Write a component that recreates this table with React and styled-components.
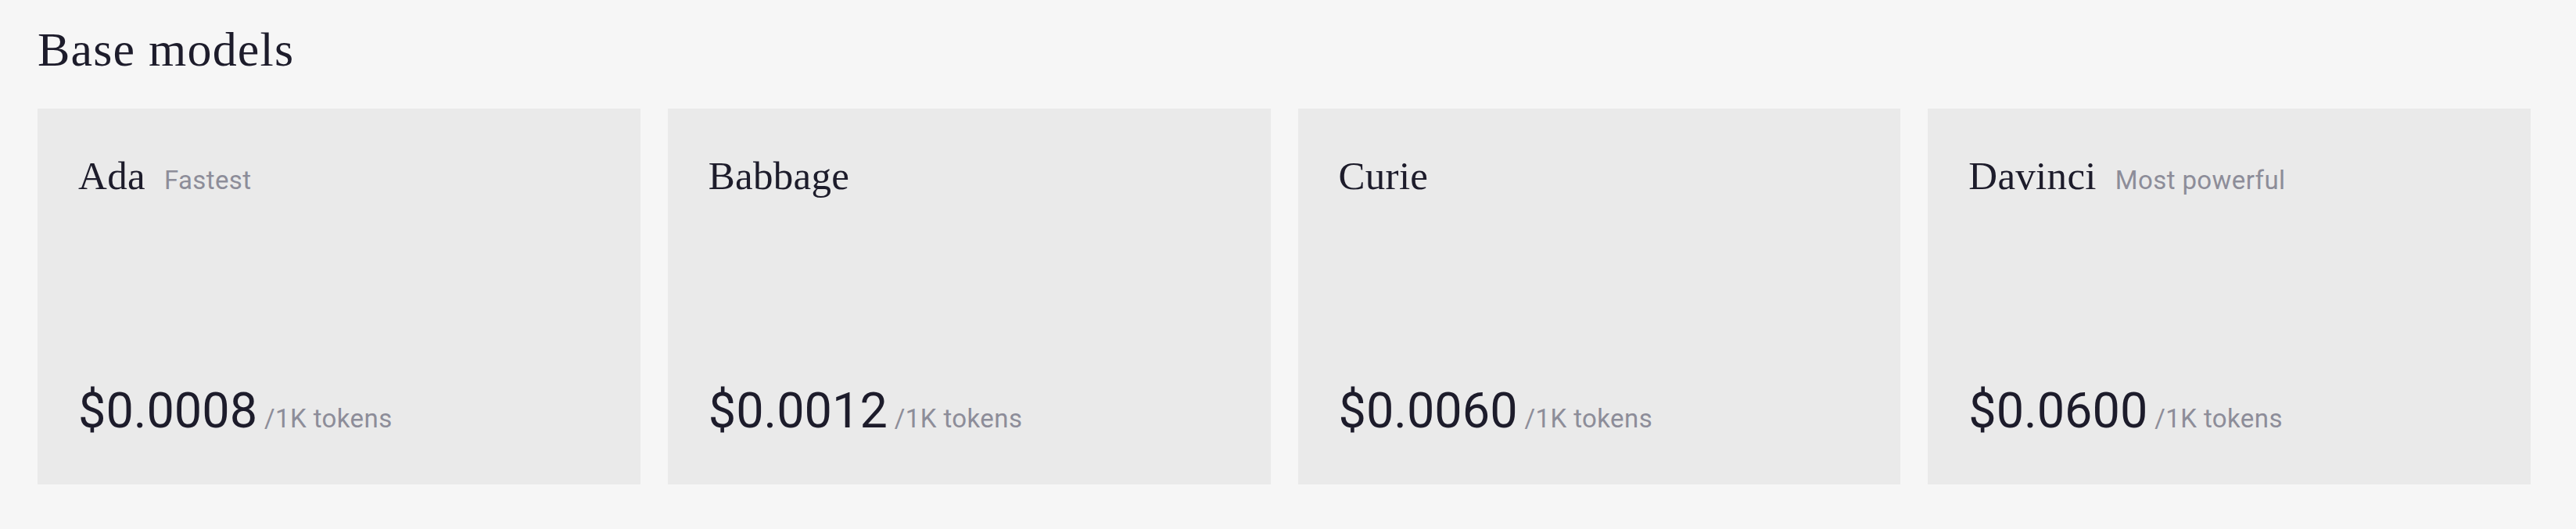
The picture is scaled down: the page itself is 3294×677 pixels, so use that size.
import React from 'react'
import styled, { createGlobalStyle } from 'styled-components'

const GlobalStyle = createGlobalStyle`
	html, body {
		margin: 0;
		padding: 0;
		background: #f6f6f6;
	}
`

const models = [
	{ name: 'Ada', note: 'Fastest', price: '$0.0008' },
	{ name: 'Babbage', price: '$0.0012' },
	{ name: 'Curie', price: '$0.0060' },
	{ name: 'Davinci', note: 'Most powerful', price: '$0.0600' },
]

const Page = styled.div`
	padding: 32px 58px 57px 48px;
	background: #f6f6f6;
	min-height: 677px;
	box-sizing: border-box;
`

const Title = styled.h2`
	margin: 0 0 45px;
	font-family: "Liberation Serif", "Times New Roman", serif;
	font-weight: 400;
	font-size: 62px;
	letter-spacing: 1.2px;
	line-height: 1;
	color: #1d1c2b;
`

const Grid = styled.div`
	display: grid;
	grid-template-columns: repeat(4, 1fr);
	gap: 35px;
`

const Card = styled.div`
	height: 481px;
	box-sizing: border-box;
	padding: 61px 52px 63px;
	background: #eaeaea;
	display: flex;
	flex-direction: column;
	justify-content: space-between;
`

const Head = styled.div`
	display: flex;
	align-items: baseline;
	gap: 24px;
`

const Name = styled.span`
	font-family: "Liberation Serif", "Times New Roman", serif;
	font-size: 51px;
	letter-spacing: 0.3px;
	line-height: 1;
	color: #1d1c2b;
`

const Muted = styled.span`
	font-family: Roboto, "Liberation Sans", sans-serif;
	font-size: 33px;
	letter-spacing: 0.4px;
	line-height: 1;
	color: #8d8d99;
`

const Price = styled.div`
	display: flex;
	align-items: baseline;
	gap: 9px;
	font-family: Roboto, "Liberation Sans", sans-serif;
`

const Amount = styled.span`
	font-size: 63px;
	line-height: 1;
	color: #1d1c2b;
`

export default function App() {
	return (
		<>
			<GlobalStyle />
			<Page>
				<Title>Base models</Title>
				<Grid>
					{models.map(m =>
						<Card key={m.name}>
							<Head>
								<Name>{m.name}</Name>
								{m.note && <Muted>{m.note}</Muted>}
							</Head>
							<Price>
								<Amount>{m.price}</Amount>
								<Muted>/1K tokens</Muted>
							</Price>
						</Card>
					)}
				</Grid>
			</Page>
		</>
	)
}
